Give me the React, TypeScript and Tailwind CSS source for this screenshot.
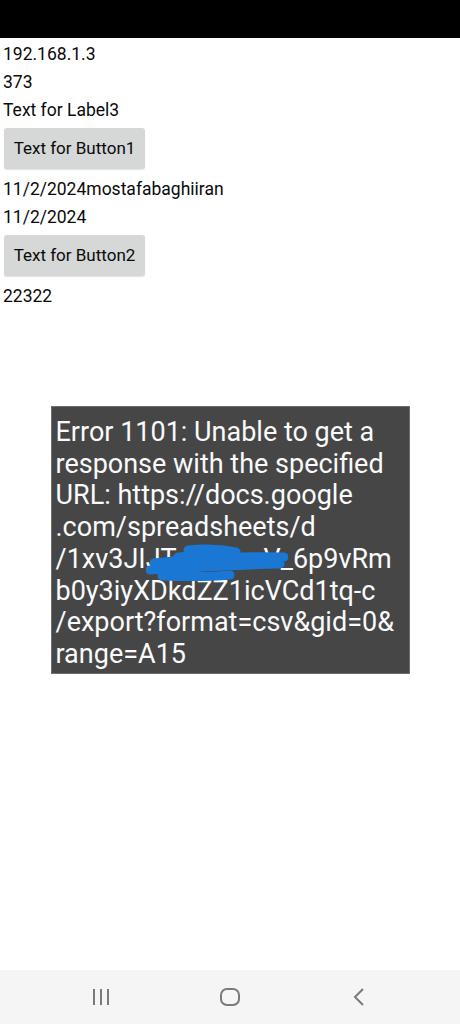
import React from "react"

const labelCls = "h-[28px] leading-[28px] text-[17.5px] text-[#0a0a0a] px-[3px] whitespace-nowrap"

function AppButton({ text }: { text: string }) {
    return (
        <div className="px-[4px] pt-[4px] pb-[6px]">
            <button className="w-[141px] h-[41px] bg-[#d6d7d7] rounded-[3px] text-[17px] text-[#0a0a0a] shadow-[0_1px_1px_rgba(0,0,0,0.12)]">
                {text}
            </button>
        </div>
    )
}

// blue marker scribble hiding part of the url
function Scribble() {
    return (
        <svg className="absolute left-0 top-0" width="142" height="38" viewBox="0 0 142 38">
            <g stroke="#1a78d4" strokeWidth="9" strokeLinecap="round" fill="none">
                <path d="M42 6 C60 4 76 5 90 8" />
                <path d="M8 19 C50 14 96 12 138 13" />
                <path d="M4 26 C50 23 96 21 134 20" />
                <path d="M16 32 C42 33 62 33 84 31" />
                <path d="M32 13 C56 11 74 12 92 16" />
            </g>
        </svg>
    )
}

export default function App() {
    return (
        <div className="w-[460px] h-[1024px] flex flex-col bg-white font-['Roboto',sans-serif]">
            <div className="h-[38px] bg-black shrink-0" />
            <div className="flex-1 pt-[2px]">
                <div className={labelCls}>192.168.1.3</div>
                <div className={labelCls}>373</div>
                <div className={labelCls}>Text for Label3</div>
                <AppButton text="Text for Button1" />
                <div className={labelCls}>11/2/2024mostafabaghiiran</div>
                <div className={labelCls}>11/2/2024</div>
                <AppButton text="Text for Button2" />
                <div className={labelCls}>22322</div>

                <div className="mt-[96px] mx-auto w-[359px] h-[268px] bg-[#464646] border border-[#6e6e6e] px-[4px] pt-[10px] text-[27px] leading-[31.7px] text-[#fafafa]">
                    <div className="whitespace-nowrap">Error 1101: Unable to get a</div>
                    <div className="whitespace-nowrap">response with the specified</div>
                    <div className="whitespace-nowrap">URL: https://docs.google</div>
                    <div className="whitespace-nowrap">.com/spreadsheets/d</div>
                    <div className="whitespace-nowrap flex">
                        <span>/1xv3JI</span>
                        <span className="relative flex justify-between w-[135px] shrink-0">
                            <span>JT</span>
                            <span>V</span>
                            <Scribble />
                        </span>
                        <span>_6p9vRm</span>
                    </div>
                    <div className="whitespace-nowrap">b0y3iyXDkdZZ1icVCd1tq-c</div>
                    <div className="whitespace-nowrap">/export?format=csv&amp;gid=0&amp;</div>
                    <div className="whitespace-nowrap">range=A15</div>
                </div>
            </div>
            <div className="h-[54px] shrink-0 bg-[#f5f5f5] flex items-center justify-center gap-[105px]">
                <svg width="24" height="20" viewBox="0 0 24 20">
                    <g stroke="#7a7a7a" strokeWidth="2">
                        <path d="M5 2 V18" />
                        <path d="M12 2 V18" />
                        <path d="M19 2 V18" />
                    </g>
                </svg>
                <svg width="24" height="20" viewBox="0 0 24 20">
                    <rect x="3" y="2" width="18" height="16" rx="6" stroke="#7a7a7a" strokeWidth="2" fill="none" />
                </svg>
                <svg width="24" height="20" viewBox="0 0 24 20">
                    <path d="M16 2 L8 10 L16 18" stroke="#7a7a7a" strokeWidth="2" fill="none" />
                </svg>
            </div>
        </div>
    )
}
